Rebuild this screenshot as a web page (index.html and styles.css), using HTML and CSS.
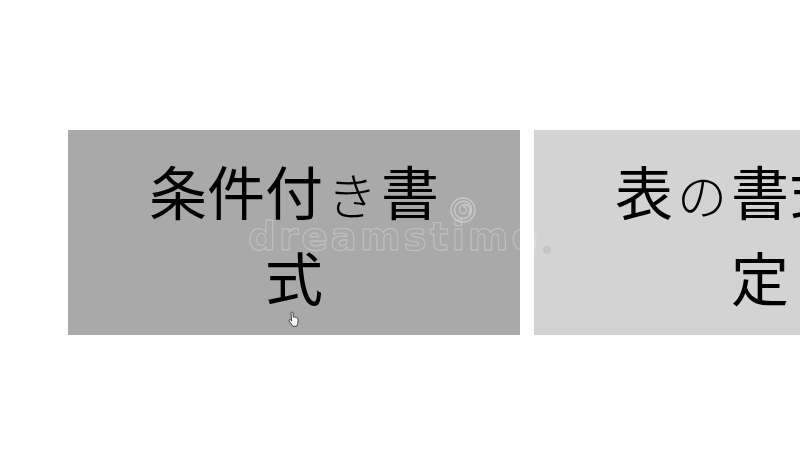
FILE: index.html
```html
<!DOCTYPE html>
<html lang="ja">
<head>
<meta charset="utf-8">
<title>条件付き書式</title>
<link rel="stylesheet" href="styles.css">
</head>
<body>
<main class="stage">
  <div class="buttons">
    <div class="tile tile-hover">条件付<span class="kana">き</span>書式</div>
    <div class="tile">表<span class="kana">の</span>書式設定</div>
  </div>
  <div class="watermark">
    <svg class="wm-spiral" viewBox="0 0 26 26" fill="none" stroke="#fff" stroke-opacity=".4" stroke-width="1.300">
      <path d="M13 9.500a3.500 3.500 0 1 1-3.500 3.500c0-3 2-5.500 5-5.500a5.500 5.500 0 0 1 3.800 9.500M13 4.500a8.500 8.500 0 1 0 8.500 8.500c0-5.500-3.500-9-8.500-9"/>
      <circle cx="13" cy="13" r="12"/>
    </svg>
    <span class="wm-text">dreamstime</span>
    <span class="wm-dot"></span>
  </div>
  <svg class="cursor" viewBox="0 0 12 17">
    <path d="M3.400 1.200c.7-.6 1.500 0 1.600.8l.3 4.200c.6-.4 1.300-.3 1.600.2.6-.3 1.200-.2 1.500.3.6-.2 1.200 0 1.400.6.4 1.500.3 3.500-.2 5.200-.3 1-.6 1.700-.8 2.800H4.700c-.5-1.300-1.600-2.500-2.900-4.300-.7-.9-1-1.700-.5-2.200.5-.4 1.200-.1 2.400 1.200L3 2.600c0-.6 0-1 .4-1.400z" fill="#fff" stroke="#333" stroke-width=".9"/>
  </svg>
</main>
</body>
</html>
```
FILE: styles.css
```css
html, body {
  margin: 0;
  padding: 0;
  background: #fff;
}

.stage {
  position: relative;
  width: 800px;
  height: 450px;
  overflow: hidden;
  background: #fff;
}

.buttons {
  display: flex;
  gap: 14px;
  padding: 130px 0 0 68px;
  width: 1200px;
}

.tile {
  box-sizing: border-box;
  width: 452px;
  height: 205px;
  flex: none;
  padding: 19px 77px 0;
  background: #d3d3d3;
  color: #000;
  font-family: "Noto Sans CJK JP", sans-serif;
  font-size: 58px;
  line-height: 83px;
  text-align: center;
}

.tile-hover {
  background: #a9a9a9;
}

.kana {
  display: inline-block;
  width: 58px;
  font-size: 50px;
  font-weight: 300;
  text-align: center;
}

.watermark {
  position: absolute;
  left: 248px;
  top: 196px;
  width: 310px;
  height: 64px;
}

.wm-spiral {
  position: absolute;
  left: 202px;
  top: 1px;
  width: 26px;
  height: 26px;
}

.wm-text {
  position: absolute;
  left: 0;
  top: 18px;
  font-family: "DejaVu Sans", sans-serif;
  font-weight: 700;
  font-size: 39px;
  line-height: 46px;
  letter-spacing: 3px;
  color: transparent;
  -webkit-text-stroke: 1px rgba(255, 255, 255, .32);
}

.wm-dot {
  position: absolute;
  left: 295px;
  top: 50px;
  width: 8px;
  height: 8px;
  border-radius: 50%;
  background: #c4c4c4;
}

.cursor {
  position: absolute;
  left: 288px;
  top: 311px;
  width: 12px;
  height: 17px;
}
```
